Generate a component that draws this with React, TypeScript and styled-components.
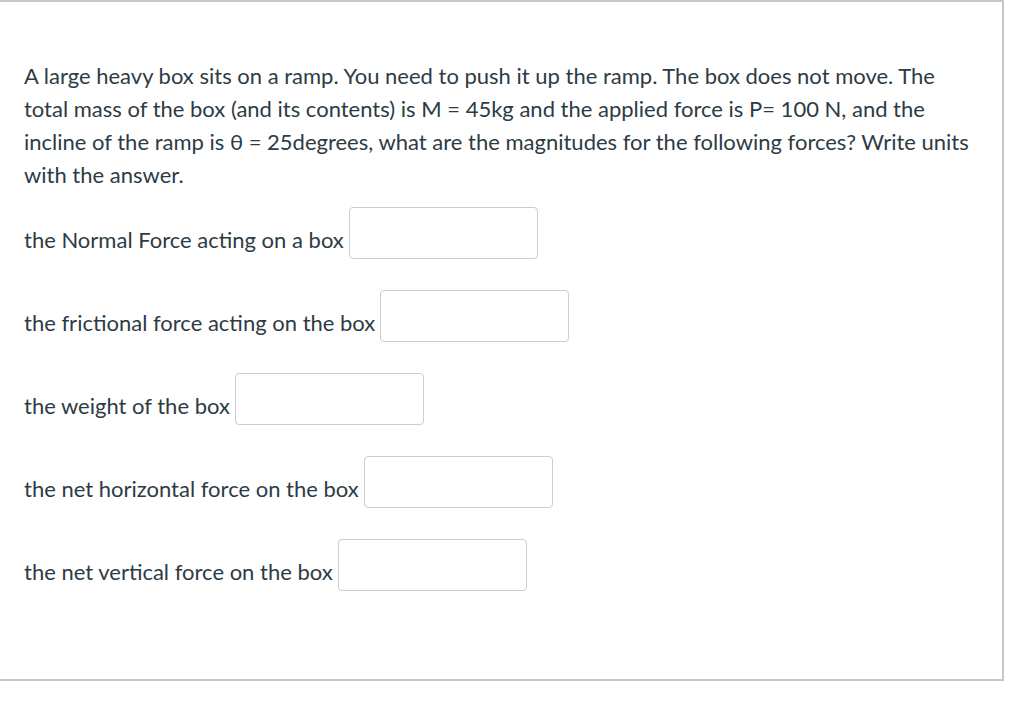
import styled, { createGlobalStyle } from 'styled-components';

const GlobalStyle = createGlobalStyle`
  html, body {
    margin: 0;
    padding: 0;
    background: #ffffff;
  }
`;

const questions = [
  'the Normal Force acting on a box',
  'the frictional force acting on the box',
  'the weight of the box',
  'the net horizontal force on the box',
  'the net vertical force on the box',
];

export default function App() {
  return (
    <>
      <GlobalStyle />
      <Card>
        <Prompt>
          A large heavy box sits on a ramp. You need to push it up the ramp. The box does not move. The
          total mass of the box (and its contents) is M = 45kg and the applied force is P= 100 N, and the
          incline of the ramp is θ = 25degrees, what are the magnitudes for the following forces? Write units
          with the answer.
        </Prompt>
        <Answers>
          {questions.map((q) => (
            <Row key={q}>
              <Label>{q}</Label>
              <AnswerInput type="text" aria-label={q} />
            </Row>
          ))}
        </Answers>
      </Card>
    </>
  );
}

const Card = styled.div`
  width: 1004px;
  height: 681px;
  box-sizing: border-box;
  border-top: 2px solid #c7c7c7;
  border-right: 2px solid #c7c7c7;
  border-bottom: 2px solid #c7c7c7;
  padding: 57px 28px 0 24px;
  font-family: Lato, 'Noto Sans', sans-serif;
  color: #2d3b45;
`;

const Prompt = styled.p`
  margin: 0;
  font-size: 22px;
  line-height: 33px;
`;

const Answers = styled.div`
  display: flex;
  flex-direction: column;
  gap: 31px;
  margin-top: 16px;
`;

const Row = styled.div`
  display: flex;
  align-items: flex-end;
`;

const Label = styled.span`
  font-size: 22px;
  line-height: 26px;
  padding-bottom: 6px;
  margin-right: 5px;
`;

const AnswerInput = styled.input`
  width: 189px;
  height: 52px;
  box-sizing: border-box;
  border: 1px solid #c7cdd1;
  border-radius: 4px;
  background: #fff;
  padding: 0 10px;
  font: inherit;
  outline: none;
`;
